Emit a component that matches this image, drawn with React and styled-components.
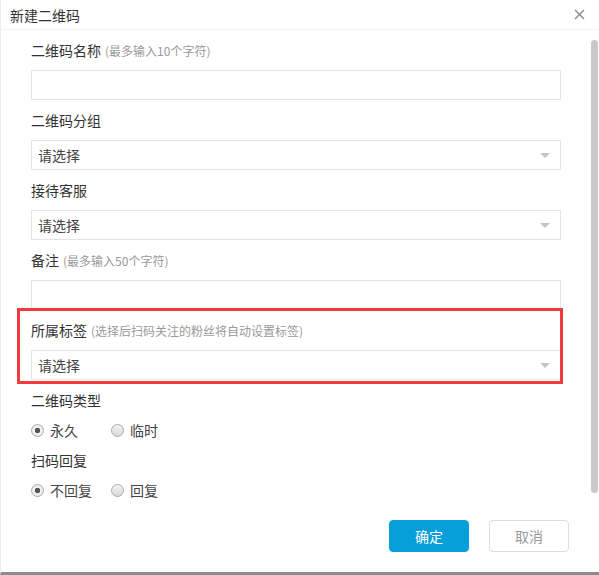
import React from 'react'
import styled, { createGlobalStyle } from 'styled-components'

const GlobalStyle = createGlobalStyle`
  html, body {
    margin: 0;
    padding: 0;
    background: #fff;
  }
  body {
    font-family: "Noto Sans CJK SC", "Liberation Sans", sans-serif;
    color: #333;
  }
`

const Dialog = styled.div`
  box-sizing: border-box;
  width: 599px;
  height: 575px;
  display: flex;
  flex-direction: column;
  background: #fff;
  border-left: 1px solid #ebebeb;
  border-bottom: 3px solid #8c8c8c;
`

const Header = styled.div`
  box-sizing: border-box;
  height: 30px;
  padding: 0 13px 0 9px;
  display: flex;
  align-items: center;
  justify-content: space-between;
  border-bottom: 1px solid #f3f4f8;
  font-size: 14px;
  color: #333;
`

const Close = styled.button`
  border: 0;
  background: none;
  padding: 0;
  width: 12px;
  height: 12px;
  display: flex;
  cursor: pointer;
`

const Body = styled.div`
  flex: 1;
  display: flex;
  min-height: 0;
`

const Content = styled.div`
  width: 530px;
  padding: 10px 0 0 30px;
`

const Rail = styled.div`
  margin-left: 30px;
  padding-top: 10px;
  width: 7px;
`

const Thumb = styled.div`
  height: 453px;
  border-radius: 4px;
  background: #c9c9c9;
`

const Field = styled.div`
  position: relative;
  margin-bottom: 10px;
  ${p => p.$marked && `
    &::after {
      content: '';
      position: absolute;
      top: -12px;
      right: -2px;
      bottom: -4px;
      left: -14px;
      border: 3px solid #f43a3a;
      pointer-events: none;
    }
  `}
`

const Label = styled.div`
  height: 20px;
  line-height: 20px;
  margin-bottom: 10px;
  font-size: 14px;
  color: #333;
`

const Hint = styled.span`
  margin-left: 4px;
  font-size: 12px;
  color: #999;
`

const Input = styled.input`
  box-sizing: border-box;
  display: block;
  width: 100%;
  height: 30px;
  margin: 0;
  padding: 0 6px;
  border: 1px solid #e3e3ea;
  outline: none;
  font: inherit;
  font-size: 14px;
`

const Select = styled.div`
  box-sizing: border-box;
  height: 30px;
  padding: 0 6px;
  border: 1px solid #e3e3ea;
  display: flex;
  align-items: center;
  justify-content: space-between;
  font-size: 14px;
  color: #444;
`

const Caret = styled.span`
  width: 0;
  height: 0;
  margin-right: 4px;
  border-left: 5px solid transparent;
  border-right: 5px solid transparent;
  border-top: 5px solid #c4c4c4;
`

const RadioRow = styled.div`
  height: 20px;
  display: flex;
  align-items: center;
`

const RadioItem = styled.label`
  width: 80px;
  display: flex;
  align-items: center;
  gap: 6px;
  font-size: 14px;
  color: #444;
`

const Dot = styled.span`
  box-sizing: border-box;
  width: 13px;
  height: 13px;
  border-radius: 50%;
  border: 1px solid #a9a9a9;
  background: ${p => (p.$on ? 'radial-gradient(circle, #555 0 2.5px, #eee 3px)' : 'linear-gradient(#f4f4f4, #d8d8d8)')};
`

const Footer = styled.div`
  padding: 10px 30px 20px 0;
  display: flex;
  justify-content: flex-end;
  gap: 20px;
`

const Button = styled.button`
  box-sizing: border-box;
  width: 80px;
  height: 32px;
  border-radius: 4px;
  font: inherit;
  font-size: 14px;
  cursor: pointer;
  border: 1px solid ${p => (p.$primary ? '#069fdc' : '#dcdce4')};
  background: ${p => (p.$primary ? '#069fdc' : '#fff')};
  color: ${p => (p.$primary ? '#fff' : '#999')};
`

const Radio = ({ on, children }) => (
  <RadioItem>
    <Dot $on={on} />
    {children}
  </RadioItem>
)

const App = () => (
  <>
    <GlobalStyle />
    <Dialog>
      <Header>
        <span>新建二维码</span>
        <Close aria-label="close">
          <svg width="11" height="11" viewBox="0 0 11 11">
            <path d="M1 1L10 10M10 1L1 10" stroke="#888" strokeWidth="1.4" />
          </svg>
        </Close>
      </Header>
      <Body>
        <Content>
          <Field>
            <Label>二维码名称<Hint>(最多输入10个字符)</Hint></Label>
            <Input />
          </Field>
          <Field>
            <Label>二维码分组</Label>
            <Select>请选择<Caret /></Select>
          </Field>
          <Field>
            <Label>接待客服</Label>
            <Select>请选择<Caret /></Select>
          </Field>
          <Field>
            <Label>备注<Hint>(最多输入50个字符)</Hint></Label>
            <Input />
          </Field>
          <Field $marked>
            <Label>所属标签<Hint>(选择后扫码关注的粉丝将自动设置标签)</Hint></Label>
            <Select>请选择<Caret /></Select>
          </Field>
          <Field>
            <Label>二维码类型</Label>
            <RadioRow>
              <Radio on>永久</Radio>
              <Radio>临时</Radio>
            </RadioRow>
          </Field>
          <Field>
            <Label>扫码回复</Label>
            <RadioRow>
              <Radio on>不回复</Radio>
              <Radio>回复</Radio>
            </RadioRow>
          </Field>
        </Content>
        <Rail>
          <Thumb />
        </Rail>
      </Body>
      <Footer>
        <Button $primary>确定</Button>
        <Button>取消</Button>
      </Footer>
    </Dialog>
  </>
)

export default App
